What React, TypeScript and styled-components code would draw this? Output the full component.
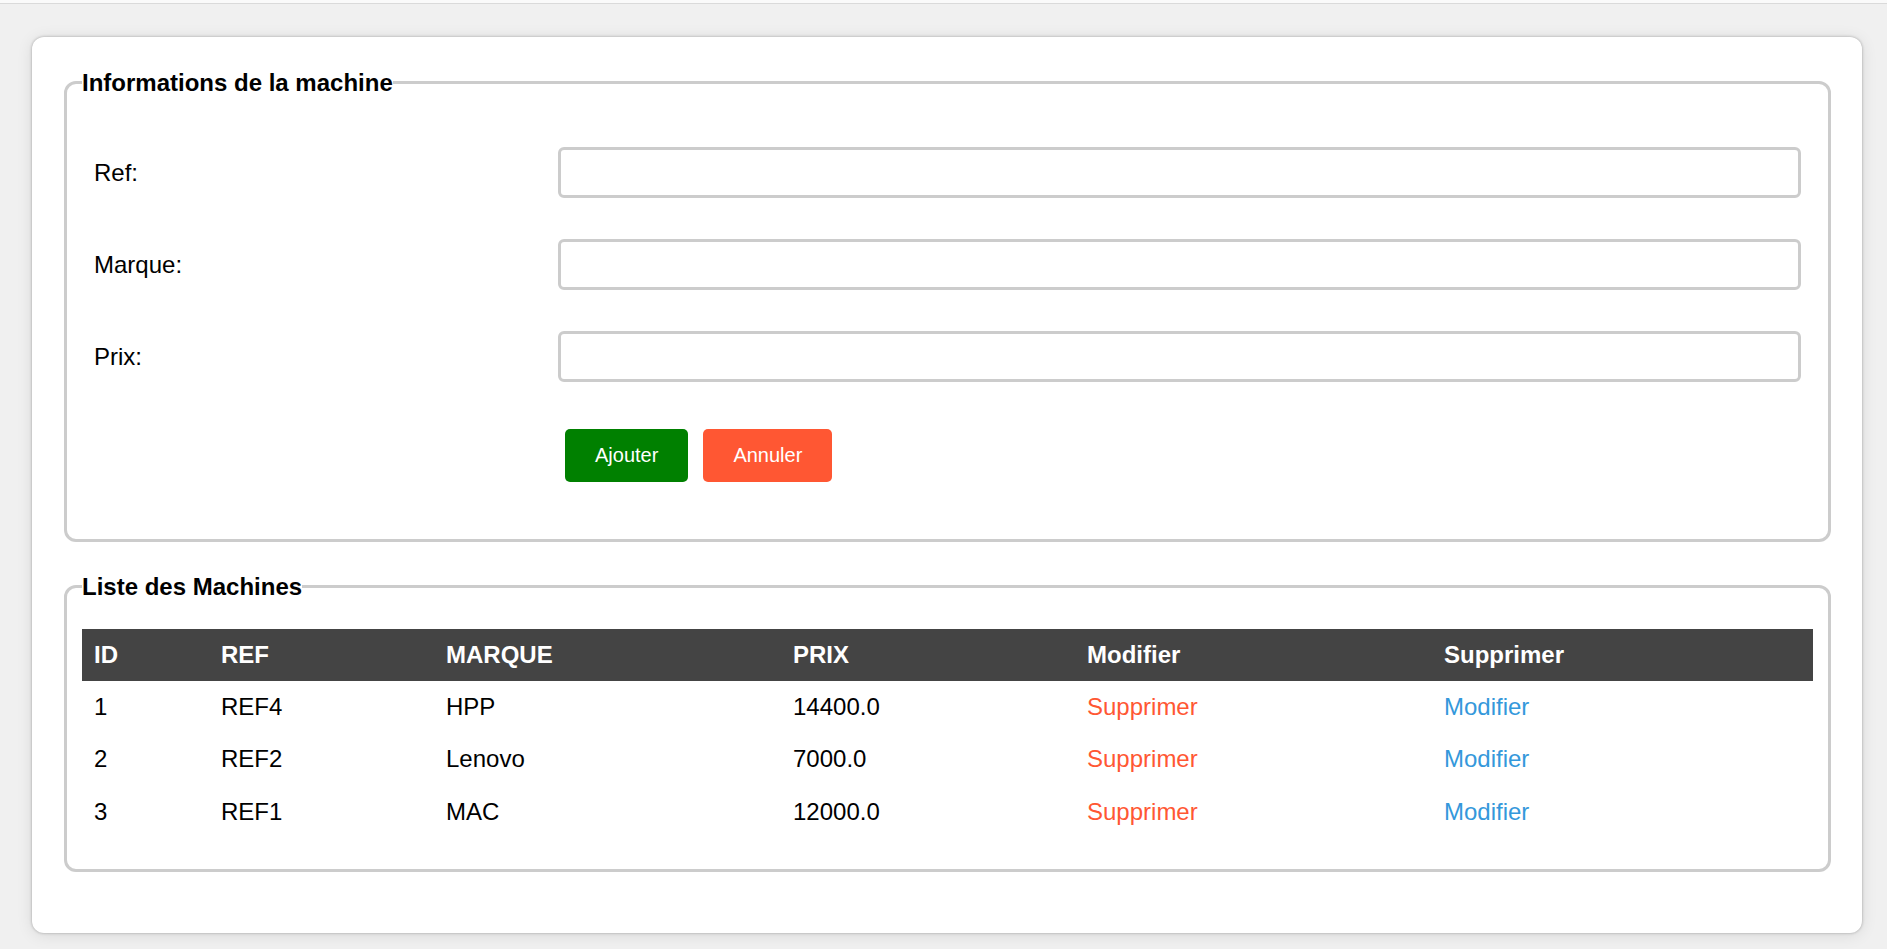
import { createGlobalStyle } from 'styled-components'
import styled from 'styled-components'

type Machine = { id: number; ref: string; marque: string; prix: string }

const machines: Machine[] = [
	{ id: 1, ref: 'REF4', marque: 'HPP', prix: '14400.0' },
	{ id: 2, ref: 'REF2', marque: 'Lenovo', prix: '7000.0' },
	{ id: 3, ref: 'REF1', marque: 'MAC', prix: '12000.0' },
]

const columns = [
	{ label: 'ID', width: 127 },
	{ label: 'REF', width: 225 },
	{ label: 'MARQUE', width: 347 },
	{ label: 'PRIX', width: 294 },
	{ label: 'Modifier', width: 357 },
	{ label: 'Supprimer', width: undefined },
]

const fields = ['Ref:', 'Marque:', 'Prix:']

export default function App() {
	return (
		<>
			<GlobalStyle />
			<TopEdge />
			<Card>
				<Fieldset $bottom={57}>
					<Legend>Informations de la machine</Legend>
					<FormGrid>
						{fields.map(label => (
							<FormRow key={label}>
								<Label>{label}</Label>
								<InputCell>
									<Input type="text" />
								</InputCell>
							</FormRow>
						))}
						<ButtonRow>
							<Button $color="#008000">Ajouter</Button>
							<Button $color="#ff5733">Annuler</Button>
						</ButtonRow>
					</FormGrid>
				</Fieldset>

				<Fieldset $bottom={31}>
					<Legend>Liste des Machines</Legend>
					<Table>
						<colgroup>
							{columns.map(c => (
								<col key={c.label} style={c.width ? { width: c.width } : undefined} />
							))}
						</colgroup>
						<thead>
							<tr>
								{columns.map(c => (
									<Th key={c.label}>{c.label}</Th>
								))}
							</tr>
						</thead>
						<tbody>
							{machines.map(m => (
								<tr key={m.id}>
									<Td>{m.id}</Td>
									<Td>{m.ref}</Td>
									<Td>{m.marque}</Td>
									<Td>{m.prix}</Td>
									<Td>
										<Action href="#" $color="#ff5733">
											Supprimer
										</Action>
									</Td>
									<Td>
										<Action href="#" $color="#3498db">
											Modifier
										</Action>
									</Td>
								</tr>
							))}
						</tbody>
					</Table>
				</Fieldset>
			</Card>
		</>
	)
}

const GlobalStyle = createGlobalStyle`
	html, body {
		margin: 0;
		padding: 0;
		background: #f0f0f0;
		font-family: "Liberation Sans", Arial, sans-serif;
		font-size: 24px;
		color: #000;
	}
`

const TopEdge = styled.div`
	height: 3px;
	background: #fafafa;
	border-bottom: 1px solid #dadada;
`

const Card = styled.div`
	box-sizing: border-box;
	width: 1830px;
	margin: 33px 0 18px 32px;
	padding: 32px 31px 30px 32px;
	background: #fff;
	border-radius: 12px;
	box-shadow: 0 0 3px rgba(0, 0, 0, 0.3), 0 2px 16px rgba(0, 0, 0, 0.1);
`

const Fieldset = styled.fieldset<{ $bottom: number }>`
	margin: 0 0 31px;
	padding: 0 15px ${p => p.$bottom}px;
	border: 3px solid #ccc;
	border-radius: 12px;
	min-inline-size: 0;
`

const Legend = styled.legend`
	padding: 0;
	font-size: 24px;
	font-weight: bold;
	line-height: 27.6px;
`

const FormGrid = styled.div`
	display: grid;
	grid-template-columns: 464px 1fr;
	margin-top: 30px;
`

const FormRow = styled.div`
	display: contents;
`

const Label = styled.label`
	display: flex;
	align-items: center;
	height: 92px;
	padding: 0 12px;
`

const InputCell = styled.div`
	display: flex;
	align-items: center;
	padding: 0 12px;
`

const Input = styled.input`
	box-sizing: border-box;
	width: 100%;
	height: 51px;
	border: 3px solid #ccc;
	border-radius: 6px;
	padding: 0 12px;
	font: inherit;
	outline: none;
`

const ButtonRow = styled.div`
	grid-column: 2;
	display: flex;
	gap: 15px;
	padding: 26px 19px 0;
`

const Button = styled.button<{ $color: string }>`
	height: 53px;
	padding: 0 30px;
	border: none;
	border-radius: 5px;
	background: ${p => p.$color};
	color: #fff;
	font-family: "Liberation Sans", Arial, sans-serif;
	font-size: 20px;
	cursor: pointer;
`

const Table = styled.table`
	width: 100%;
	margin-top: 29px;
	border-collapse: collapse;
	table-layout: fixed;
`

const Th = styled.th`
	padding: 12px;
	background: #444;
	color: #fff;
	font-weight: bold;
	text-align: left;
	line-height: 27.6px;
`

const Td = styled.td`
	padding: 12px;
	text-align: left;
	line-height: 28.4px;
`

const Action = styled.a<{ $color: string }>`
	color: ${p => p.$color};
	text-decoration: none;
`
